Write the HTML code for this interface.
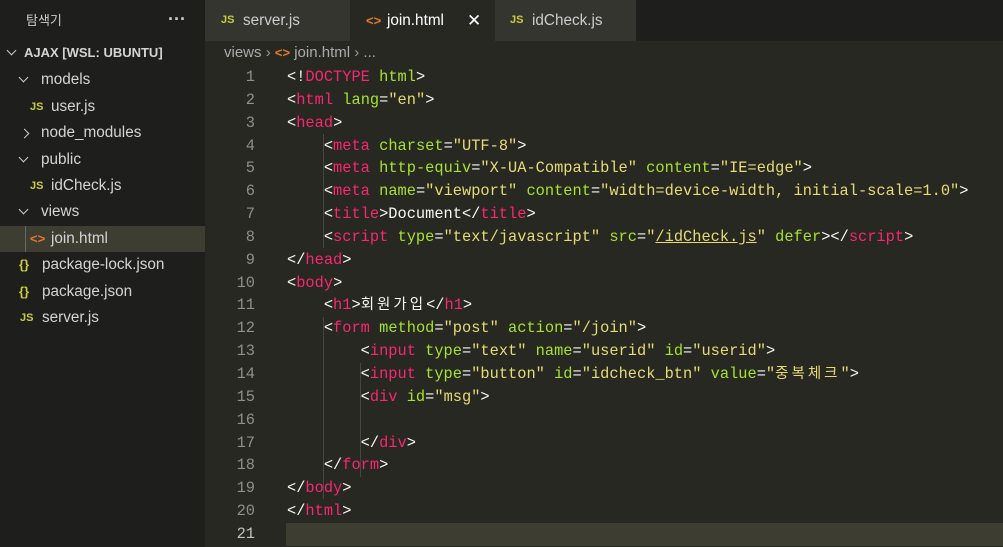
<!DOCTYPE html>
<html><head><meta charset="utf-8"><style>
*{margin:0;padding:0;box-sizing:border-box}
body{width:1003px;height:547px;overflow:hidden;background:#272822;position:relative;font-family:"Liberation Sans","Noto Sans CJK KR",sans-serif;color:#ccc}
#side{position:absolute;left:0;top:0;width:205px;height:547px;background:#1e1f1c}
#side .title{position:absolute;left:26px;top:10px;font-size:13px;color:#ccc}
#side .dots{position:absolute;left:168px;top:10px;font-size:18px;line-height:18px;color:#ccc;letter-spacing:0px;font-weight:bold}
.row{position:absolute;left:0;width:205px;height:26px;line-height:26px;font-size:15.3px;color:#d4d4d4;white-space:nowrap}
.row.sel{background:#3e3d32}
.chev{display:inline-block;width:7px;height:7px;border-right:1.3px solid #ccc;border-bottom:1.3px solid #ccc;transform:rotate(45deg);position:absolute;top:7px}
.chev.r{transform:rotate(-45deg);top:10px}
.js{color:#cbcb41;font-size:11px;font-weight:bold;position:absolute}
.br{color:#cbcb41;font-size:13px;font-weight:bold;position:absolute}
.ht{color:#e37933;font-size:13px;font-weight:bold;position:absolute}
#tabs{position:absolute;left:205px;top:0;width:798px;height:41px;background:#1e1f1c}
.tab{position:absolute;top:0;height:41px;line-height:41px;font-size:15.3px;color:#ccc;background:#34352f}
#crumb{position:absolute;left:224px;top:44px;font-size:15px;color:#aaa;white-space:nowrap}
#code{position:absolute;left:205px;top:66px;width:798px;font-family:"Liberation Mono","Noto Sans CJK KR",monospace;font-size:15.35px}
.l{position:relative;height:22.85px;line-height:22.85px;white-space:pre;color:#f8f8f2}
.l.cur{background:#3e3d32;margin-left:81px}
.l.cur .n{left:-81px;color:#c2c2bf}
.n{position:absolute;left:0;width:50px;text-align:right;color:#90908a}
.c{position:absolute;left:82px}
.t{color:#f92672}.a{color:#a6e22e}.s{color:#e6db74}
.k{letter-spacing:3px;font-size:14.5px}
.g{position:absolute;top:0;width:1px;background:#464741}
</style></head><body>
<div id="side">
<div class="title">탐색기</div><div class="dots">···</div>
<div class="row" style="top:40px;font-weight:bold;font-size:13px"><span class="chev" style="left:8px"></span><span style="position:absolute;left:24px">AJAX [WSL: UBUNTU]</span></div>
<div class="row" style="top:67px"><span class="chev" style="left:20px"></span><span style="position:absolute;left:41px">models</span></div>
<div class="row" style="top:94px"><span class="js" style="left:30px">JS</span><span style="position:absolute;left:51px">user.js</span></div>
<div class="row" style="top:120px"><span class="chev r" style="left:21px"></span><span style="position:absolute;left:41px">node_modules</span></div>
<div class="row" style="top:147px"><span class="chev" style="left:20px"></span><span style="position:absolute;left:41px">public</span></div>
<div class="row" style="top:173px"><span class="js" style="left:30px">JS</span><span style="position:absolute;left:51px">idCheck.js</span></div>
<div class="row" style="top:199px"><span class="chev" style="left:20px"></span><span style="position:absolute;left:41px">views</span></div>
<div class="row sel" style="top:226px"><span style="position:absolute;left:25px;top:0;width:1px;height:26px;background:#666"></span><span class="ht" style="left:30px">&lt;&gt;</span><span style="position:absolute;left:51px">join.html</span></div>
<div class="row" style="top:252px"><span class="br" style="left:19px">{}</span><span style="position:absolute;left:42px">package-lock.json</span></div>
<div class="row" style="top:279px"><span class="br" style="left:19px">{}</span><span style="position:absolute;left:42px">package.json</span></div>
<div class="row" style="top:305px"><span class="js" style="left:20px">JS</span><span style="position:absolute;left:42px">server.js</span></div>
</div>
<div id="tabs">
<div class="tab" style="left:0;width:145px"><span class="js" style="left:16px;top:0">JS</span><span style="position:absolute;left:38px">server.js</span></div>
<div class="tab" style="left:145px;width:145px;background:#272822;color:#fff"><span class="ht" style="left:16px;top:0">&lt;&gt;</span><span style="position:absolute;left:37px">join.html</span><span style="position:absolute;left:117px;font-size:17px">✕</span></div>
<div class="tab" style="left:290px;width:141px"><span class="js" style="left:15px;top:0">JS</span><span style="position:absolute;left:37px">idCheck.js</span></div>
</div>
<div id="crumb">views <span style="color:#999">›</span> <span style="color:#e37933;font-weight:bold;font-size:13px">&lt;&gt;</span> join.html <span style="color:#999">›</span> ...</div>
<div id="code">
<div class="g" style="left:118px;top:68px;height:114px"></div>
<div class="g" style="left:118px;top:251px;height:182px"></div>
<div class="g" style="left:155px;top:297px;height:114px"></div>
<div class="l"><span class="n">1</span><span class="c">&lt;!<span class="t">DOCTYPE</span> <span class="a">html</span>&gt;</span></div>
<div class="l"><span class="n">2</span><span class="c">&lt;<span class="t">html</span> <span class="a">lang</span>=<span class="s">"en"</span>&gt;</span></div>
<div class="l"><span class="n">3</span><span class="c">&lt;<span class="t">head</span>&gt;</span></div>
<div class="l"><span class="n">4</span><span class="c">    &lt;<span class="t">meta</span> <span class="a">charset</span>=<span class="s">"UTF-8"</span>&gt;</span></div>
<div class="l"><span class="n">5</span><span class="c">    &lt;<span class="t">meta</span> <span class="a">http-equiv</span>=<span class="s">"X-UA-Compatible"</span> <span class="a">content</span>=<span class="s">"IE=edge"</span>&gt;</span></div>
<div class="l"><span class="n">6</span><span class="c">    &lt;<span class="t">meta</span> <span class="a">name</span>=<span class="s">"viewport"</span> <span class="a">content</span>=<span class="s">"width=device-width, initial-scale=1.0"</span>&gt;</span></div>
<div class="l"><span class="n">7</span><span class="c">    &lt;<span class="t">title</span>&gt;Document&lt;/<span class="t">title</span>&gt;</span></div>
<div class="l"><span class="n">8</span><span class="c">    &lt;<span class="t">script</span> <span class="a">type</span>=<span class="s">"text/javascript"</span> <span class="a">src</span>=<span class="s">"<u>/idCheck.js</u>"</span> <span class="a">defer</span>&gt;&lt;/<span class="t">script</span>&gt;</span></div>
<div class="l"><span class="n">9</span><span class="c">&lt;/<span class="t">head</span>&gt;</span></div>
<div class="l"><span class="n">10</span><span class="c">&lt;<span class="t">body</span>&gt;</span></div>
<div class="l"><span class="n">11</span><span class="c">    &lt;<span class="t">h1</span>&gt;<span class="k">회원가입</span>&lt;/<span class="t">h1</span>&gt;</span></div>
<div class="l"><span class="n">12</span><span class="c">    &lt;<span class="t">form</span> <span class="a">method</span>=<span class="s">"post"</span> <span class="a">action</span>=<span class="s">"/join"</span>&gt;</span></div>
<div class="l"><span class="n">13</span><span class="c">        &lt;<span class="t">input</span> <span class="a">type</span>=<span class="s">"text"</span> <span class="a">name</span>=<span class="s">"userid"</span> <span class="a">id</span>=<span class="s">"userid"</span>&gt;</span></div>
<div class="l"><span class="n">14</span><span class="c">        &lt;<span class="t">input</span> <span class="a">type</span>=<span class="s">"button"</span> <span class="a">id</span>=<span class="s">"idcheck_btn"</span> <span class="a">value</span>=<span class="s">"<span class="k">중복체크</span>"</span>&gt;</span></div>
<div class="l"><span class="n">15</span><span class="c">        &lt;<span class="t">div</span> <span class="a">id</span>=<span class="s">"msg"</span>&gt;</span></div>
<div class="l"><span class="n">16</span><span class="c"> </span></div>
<div class="l"><span class="n">17</span><span class="c">        &lt;/<span class="t">div</span>&gt;</span></div>
<div class="l"><span class="n">18</span><span class="c">    &lt;/<span class="t">form</span>&gt;</span></div>
<div class="l"><span class="n">19</span><span class="c">&lt;/<span class="t">body</span>&gt;</span></div>
<div class="l"><span class="n">20</span><span class="c">&lt;/<span class="t">html</span>&gt;</span></div>
<div class="l cur"><span class="n">21</span></div>
</div>
</body></html>
